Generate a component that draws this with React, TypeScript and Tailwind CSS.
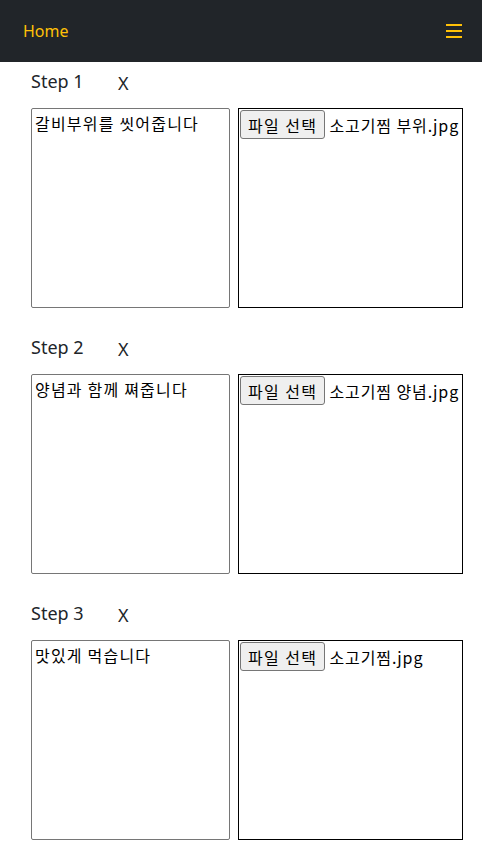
import React from 'react';

const steps = [
  { no: 1, text: '갈비부위를 씻어줍니다', file: '소고기찜 부위.jpg' },
  { no: 2, text: '양념과 함께 쪄줍니다', file: '소고기찜 양념.jpg' },
  { no: 3, text: '맛있게 먹습니다', file: '소고기찜.jpg' },
];

const font = { fontFamily: '"Noto Sans", "Noto Sans CJK KR", sans-serif' };
const kr = { fontFamily: '"Noto Sans CJK KR", sans-serif' };

function StepCard({ no, text, file }: { no: number; text: string; file: string }) {
  return (
    <section className="mt-[20px] first:mt-0">
      <div className="flex h-[46px] items-start pt-[6px] text-[18px] leading-[27px] text-[#212529]">
        <span className="w-[87px]">Step {no}</span>
        <span className="pt-[2px]">X</span>
      </div>
      <div className="flex gap-[8px]">
        <textarea
          defaultValue={text}
          className="h-[200px] w-[199px] shrink-0 resize-none rounded-[2px] border border-[#767676] px-[3px] py-[3px] text-[16px] leading-[22px] tracking-[1.2px] text-black outline-none"
          style={kr}
        />
        <div className="h-[200px] w-[225px] shrink-0 border border-black">
          <div className="flex items-center gap-[4px] p-[1px] text-[16px] text-black" style={kr}>
            <span className="flex h-[29px] shrink-0 items-center rounded-[3px] border border-[#767676] bg-[#efefef] px-[7px] tracking-[1.4px]">파일 선택</span>
            <span className="whitespace-nowrap tracking-[0.9px]">{file}</span>
          </div>
        </div>
      </div>
    </section>
  );
}

export default function App() {
  return (
    <div className="min-h-[845px] bg-white" style={font}>
      <nav className="flex h-[62px] items-center justify-between bg-[#212529] pl-[23px] pr-[20px]">
        <span className="text-[16px] text-[#ffc107]">Home</span>
        <span className="flex flex-col gap-[4px]">
          <span className="h-[2px] w-[16px] bg-[#ffc107]" />
          <span className="h-[2px] w-[16px] bg-[#ffc107]" />
          <span className="h-[2px] w-[16px] bg-[#ffc107]" />
        </span>
      </nav>
      <main className="px-[31px]">
        {steps.map(s => <StepCard key={s.no} {...s} />)}
      </main>
    </div>
  );
}
